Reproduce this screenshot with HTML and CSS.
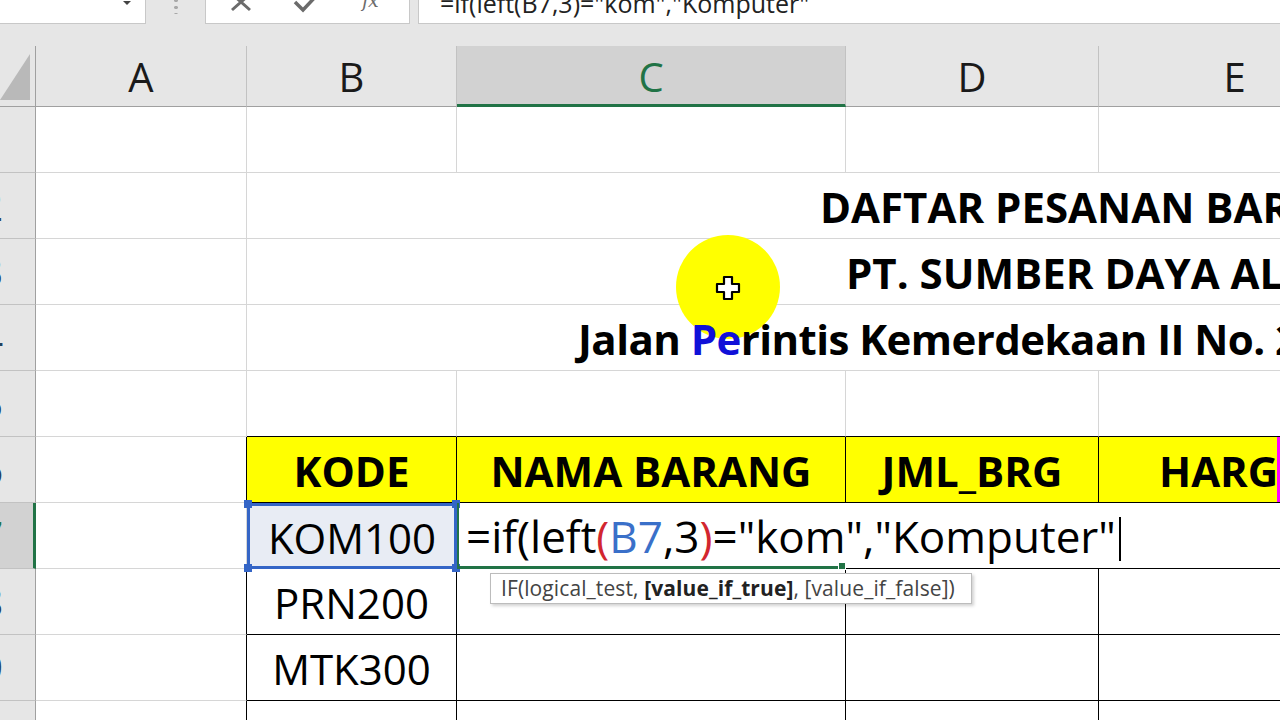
FILE: index.html
```html
<!DOCTYPE html>
<html lang="id">
<head>
    <meta charset="UTF-8">
    <meta name="viewport" content="width=device-width, initial-scale=1.0">
    <title>Daftar Pesanan Barang - Excel</title>
    <link rel="stylesheet" href="styles.css">
</head>
<body>
    <div class="ribbon">
        <div class="namebox"><span class="dd"></span></div>
        <div class="grip"></div>
        <div class="fbtns">
            <svg class="ico" width="30" height="14" viewBox="0 0 30 14"><path d="M6 -6 L24 10 M24 -6 L6 10" stroke="#6b6b6b" stroke-width="3" fill="none"/></svg>
            <svg class="ico" width="30" height="14" viewBox="0 0 30 14"><path d="M4 2 L12 10 L27 -6" stroke="#6b6b6b" stroke-width="3.5" fill="none"/></svg>
            <span class="fx">fx</span>
        </div>
        <div class="finput"><span>=if(left(B7,3)="kom","Komputer"</span></div>
    </div>

    <div class="sheet">
        <div class="hilite">
            <svg width="26" height="26" viewBox="0 0 26 26"><path d="M9 2 H17 V9 H24 V17 H17 V24 H9 V17 H2 V9 H9 Z" fill="#fff" stroke="#000" stroke-width="2.2" stroke-linejoin="round"/></svg>
        </div>

        <div class="row colhead">
            <div class="corner"><svg width="30" height="46" viewBox="0 0 30 46"><path d="M30 0 V46 H0 Z" fill="#b9b9b9"/></svg></div>
            <div class="ch">A</div>
            <div class="ch">B</div>
            <div class="ch on">C</div>
            <div class="ch">D</div>
            <div class="ch">E</div>
        </div>

        <div class="row">
            <div class="rh"><span>1</span></div>
            <div class="c"></div><div class="c"></div><div class="c"></div><div class="c"></div><div class="c"></div>
        </div>

        <div class="row">
            <div class="rh"><span>2</span></div>
            <div class="c"></div>
            <div class="c merged t1"><span class="title">DAFTAR PESANAN BARANG</span></div>
        </div>

        <div class="row">
            <div class="rh"><span>3</span></div>
            <div class="c"></div>
            <div class="c merged t2"><span class="title">PT. SUMBER DAYA ALAM</span></div>
        </div>

        <div class="row">
            <div class="rh"><span>4</span></div>
            <div class="c"></div>
            <div class="c merged t3"><span class="title addr">Jalan <span class="blue">Pe</span>rintis Kemerdekaan II No. 20</span></div>
        </div>

        <div class="row">
            <div class="rh"><span>5</span></div>
            <div class="c"></div>
            <div class="c top"></div><div class="c top"></div><div class="c top"></div><div class="c top"></div>
        </div>

        <div class="row">
            <div class="rh"><span>6</span></div>
            <div class="c ab"></div>
            <div class="tb hd">KODE</div>
            <div class="tb hd">NAMA BARANG</div>
            <div class="tb hd">JML_BRG</div>
            <div class="tb hd last"><span class="cut">HARGA</span></div>
        </div>

        <div class="row">
            <div class="rh sel"><span>7</span></div>
            <div class="c"></div>
            <div class="tb val active">KOM100
                <span class="h tl"></span><span class="h tr"></span><span class="h bl"></span><span class="h br"></span>
            </div>
            <div class="tb edit">
                <span class="formula">=if(left<span class="red">(</span><span class="ref">B7</span>,3<span class="red">)</span>="kom","Komputer"<span class="caret"></span></span>
                <span class="fill"></span>
            </div>
            <div class="tb nr"></div>
            <div class="tb nr"></div>
        </div>

        <div class="row">
            <div class="rh"><span>8</span></div>
            <div class="c ab"></div>
            <div class="tb val">PRN200</div>
            <div class="tb tipcell">
                <div class="tip">IF(logical_test, <b>[value_if_true]</b>, [value_if_false])</div>
            </div>
            <div class="tb"></div>
            <div class="tb"></div>
        </div>

        <div class="row">
            <div class="rh"><span>9</span></div>
            <div class="c ab"></div>
            <div class="tb val">MTK300</div>
            <div class="tb"></div><div class="tb"></div><div class="tb"></div>
        </div>

        <div class="row">
            <div class="rh"><span>10</span></div>
            <div class="c ab"></div>
            <div class="tb val">MNT400</div>
            <div class="tb"></div><div class="tb"></div><div class="tb"></div>
        </div>
    </div>
</body>
</html>
```

FILE: styles.css
```css
body {
    margin: 0;
    padding: 0;
    width: 1280px;
    height: 720px;
    overflow: hidden;
    background: #ffffff;
    font-family: 'Open Sans', 'Liberation Sans', sans-serif;
    color: #000;
}
.ribbon {
    height: 46px;
    background-color: #e6e6e6;
    display: flex;
    align-items: flex-start;
}
.namebox {
    width: 146px;
    height: 24px;
    background: #fff;
    border-right: 1px solid #c8c8c8;
    border-bottom: 1px solid #c8c8c8;
    box-sizing: border-box;
    display: flex;
    justify-content: flex-end;
    padding-right: 14px;
}
.dd {
    width: 0;
    height: 0;
    border-left: 4px solid transparent;
    border-right: 4px solid transparent;
    border-top: 4px solid #444;
    margin-top: 1px;
}
.grip {
    width: 59px;
    height: 14px;
    background: radial-gradient(circle, #a8a8a8 1.6px, transparent 2px) center -3px / 4px 7px repeat-y;
}
.fbtns {
    width: 205px;
    height: 24px;
    background: #fff;
    border: 1px solid #c8c8c8;
    border-top: none;
    box-sizing: border-box;
    display: flex;
    align-items: flex-start;
    padding-left: 20px;
    gap: 35px;
}
.ico {
    display: block;
}
.fx {
    font-family: 'DejaVu Serif', 'Liberation Serif', serif;
    font-style: italic;
    font-size: 19px;
    color: #6b6b6b;
    line-height: 1;
    margin-top: -9px;
    margin-left: 6px;
    letter-spacing: -1px;
}
.finput {
    flex: 1;
    margin-left: 8px;
    height: 24px;
    background: #fff;
    border-left: 1px solid #c8c8c8;
    border-bottom: 1px solid #c8c8c8;
    box-sizing: border-box;
    padding-left: 21px;
    overflow: hidden;
}
.finput span {
    display: block;
    font-size: 25px;
    line-height: 1;
    margin-top: -9px;
    color: #222;
    white-space: nowrap;
}
.sheet {
    position: relative;
}
.row {
    display: grid;
    grid-template-columns: 36px 211px 210px 389px 253px 272px;
    height: 66px;
}
.colhead {
    height: 61px;
    background: #e6e6e6;
}
.corner {
    border-right: 1px solid #a0a0a0;
    border-bottom: 1px solid #a0a0a0;
    padding-top: 8px;
    box-sizing: border-box;
}
.corner svg {
    display: block;
}
.ch {
    border-right: 1px solid #c2c2c2;
    border-bottom: 1px solid #a0a0a0;
    display: flex;
    align-items: center;
    justify-content: center;
    font-size: 40px;
    color: #1a1a1a;
    box-sizing: border-box;
}
.ch.on {
    background: #d2d2d2;
    color: #217346;
    border-bottom: 3px solid #217346;
    padding-top: 2px;
}
.rh {
    background: #e6e6e6;
    border-right: 1px solid #a0a0a0;
    border-bottom: 1px solid #c2c2c2;
    box-sizing: border-box;
    overflow: hidden;
    display: flex;
    align-items: center;
    justify-content: flex-end;
    padding-right: 32px;
}
.rh span {
    font-size: 40px;
    color: #23415e;
}
.rh.sel {
    background: #d2d2d2;
    border-right: 3px solid #217346;
    padding-right: 30px;
}
.rh.sel span {
    color: #217346;
}
.c {
    border-right: 1px solid #d6d6d6;
    border-bottom: 1px solid #d6d6d6;
    box-sizing: border-box;
}
.c.ab {
    border-right-color: #000;
}
.c.top {
    border-bottom-color: #000;
}
.merged {
    grid-column: 3 / -1;
    display: flex;
    align-items: center;
    overflow: hidden;
    white-space: nowrap;
    padding-top: 2px;
}
.t1 { padding-left: 573px; }
.t2 { padding-left: 599px; }
.t3 { padding-left: 331px; }
.title {
    position: relative;
    z-index: 3;
    font-weight: bold;
    font-size: 42px;
}
.title.addr {
    letter-spacing: -0.55px;
}
.blue {
    color: #1010d8;
}
.tb {
    border-right: 1px solid #000;
    border-bottom: 1px solid #000;
    box-sizing: border-box;
    display: flex;
    align-items: center;
    justify-content: center;
}
.tb.nr {
    border-right: none;
}
.hd {
    background: #ffff00;
    font-weight: bold;
    font-size: 42px;
    padding-top: 2px;
    white-space: nowrap;
    overflow: hidden;
}
.hd.last {
    justify-content: flex-start;
    padding-left: 60px;
    background: linear-gradient(to right, #ffff00 178px, #ff00ff 178px, #ff00ff 181px, #ffff00 181px);
}
.hd.last .cut {
    display: block;
    width: 118px;
    overflow: hidden;
}
.val {
    font-size: 42px;
    padding-top: 2px;
}
.active {
    position: relative;
    background: #e8ecf4;
    border: 3px solid #3465c6;
}
.h {
    position: absolute;
    width: 8px;
    height: 8px;
    background: #3465c6;
}
.h.tl { left: -6px; top: -6px; }
.h.tr { right: -6px; top: -6px; }
.h.bl { left: -6px; bottom: -6px; }
.h.br { right: -6px; bottom: -6px; }
.edit {
    position: relative;
    z-index: 1;
    justify-content: flex-start;
    border-left: 2px solid #217346;
    border-bottom: 3px solid #217346;
    border-right: none;
    padding-left: 7px;
    padding-top: 2px;
    overflow: visible;
}
.formula {
    font-size: 44px;
    white-space: nowrap;
}
.red {
    color: #d2262f;
}
.ref {
    color: #3a70c9;
}
.caret {
    display: inline-block;
    width: 2px;
    height: 44px;
    background: #000;
    margin-left: 3px;
    vertical-align: -8px;
}
.fill {
    position: absolute;
    right: 0;
    bottom: -4px;
    width: 6px;
    height: 6px;
    background: #217346;
    border: 1px solid #fff;
}
.tipcell {
    position: relative;
}
.tip {
    position: absolute;
    left: 33px;
    top: 4px;
    width: 482px;
    height: 31px;
    box-sizing: border-box;
    background: #fff;
    border: 1px solid #bcbcbc;
    box-shadow: 2px 2px 3px rgba(0, 0, 0, 0.18);
    z-index: 4;
    font-size: 21px;
    letter-spacing: 0.1px;
    color: #444;
    padding-left: 10px;
    line-height: 29px;
    white-space: nowrap;
    overflow: hidden;
}
.tip b {
    color: #222;
}
.hilite {
    position: absolute;
    left: 676px;
    top: 189px;
    width: 104px;
    height: 104px;
    border-radius: 50%;
    background: #ffff00;
    z-index: 2;
    display: flex;
    align-items: center;
    justify-content: center;
}
.hilite svg {
    display: block;
    margin-top: 2px;
}
```
